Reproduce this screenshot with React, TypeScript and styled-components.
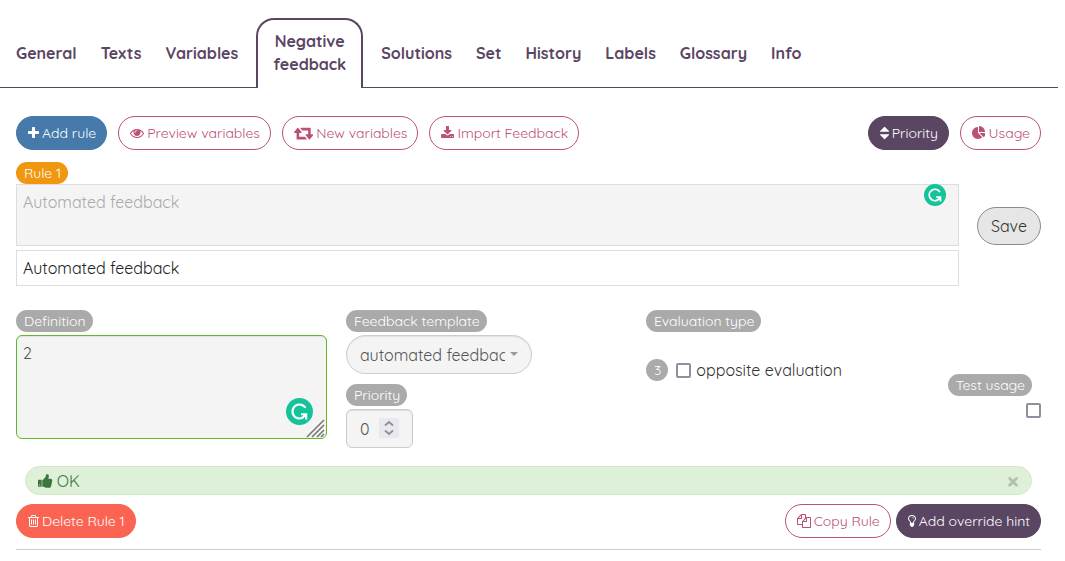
import React from 'react';
import styled, { createGlobalStyle, css } from 'styled-components';

const GlobalStyle = createGlobalStyle`
  *, *::before, *::after { box-sizing: border-box; }
  body {
    margin: 0;
    background: #fff;
    color: #333;
    font-family: Quicksand, Lato, 'Open Sans', sans-serif;
    font-size: 16px;
    line-height: 22px;
  }
  button, input, select, textarea { font: inherit; margin: 0; }
`;

const plum = '#5a4663';
const rose = '#bb5078';

/* Icons: drawn on a 1792 unit high grid, cropped to the width of the glyph */
const glyphs = {
  plus: ['192 0 1408 1792', 'M1600 736v192q0 40-28 68t-68 28h-416v416q0 40-28 68t-68 28h-192q-40 0-68-28t-28-68v-416h-416q-40 0-68-28t-28-68v-192q0-40 28-68t68-28h416v-416q0-40 28-68t68-28h192q40 0 68 28t28 68v416h416q40 0 68 28t28 68z'],
  eye: ['0 0 1792 1792', 'M1664 960q-152-236-381-353 61 104 61 225 0 185-131.5 316.5t-316.5 131.5-316.5-131.5-131.5-316.5q0-121 61-225-229 117-381 353 133 205 333.5 326.5t434.5 121.5 434.5-121.5 333.5-326.5zm-720-384q0-20-14-34t-34-14q-125 0-214.5 89.5t-89.5 214.5q0 20 14 34t34 14 34-14 14-34q0-86 61-147t147-61q20 0 34-14t14-34zm848 384q0 34-20 69-140 230-376.5 368.5t-499.5 138.5-499.5-139-376.5-368q-20-35-20-69t20-69q140-229 376.5-368t499.5-139 499.5 139 376.5 368q20 35 20 69z'],
  retweet: ['0 0 1920 1792', 'M1280 1504q0 13-9.5 22.5t-22.5 9.5h-960q-8 0-13.5-2t-9-7-5.5-8-3-11.5-1-11.5v-600h-192q-26 0-45-19t-19-45q0-24 15-41l320-384q19-22 49-22t49 22l320 384q15 17 15 41 0 26-19 45t-45 19h-192v384h576q16 0 25 11l160 192q7 10 7 21zm640-416q0 24-15 41l-320 384q-20 23-49 23t-49-23l-320-384q-15-17-15-41 0-26 19-45t45-19h192v-384h-576q-16 0-25-12l-160-192q-7-9-7-20 0-13 9.5-22.5t22.5-9.5h960q8 0 13.5 2t9 7 5.5 8 3 11.5 1 11.5v600h192q26 0 45 19t19 45z'],
  download: ['64 0 1664 1792', 'M1344 1344q0-26-19-45t-45-19-45 19-19 45 19 45 45 19 45-19 19-45zm256 0q0-26-19-45t-45-19-45 19-19 45 19 45 45 19 45-19 19-45zm128-224v320q0 40-28 68t-68 28h-1472q-40 0-68-28t-28-68v-320q0-40 28-68t68-28h465l135 136q58 56 136 56t136-56l136-136h464q40 0 68 28t28 68zm-325-569q17 41-14 70l-448 448q-18 19-45 19t-45-19l-448-448q-31-29-14-70 17-39 59-39h256v-448q0-26 19-45t45-19h256q26 0 45 19t19 45v448h256q42 0 59 39z'],
  sort: ['384 0 1024 1792', 'M1408 1088q0 26-19 45l-448 448q-19 19-45 19t-45-19l-448-448q-19-19-19-45t19-45 45-19h896q26 0 45 19t19 45zm0-384q0 26-19 45t-45 19h-896q-26 0-45-19t-19-45 19-45l448-448q19-19 45-19t45 19l448 448q19 19 19 45z'],
  pie: ['0 0 1728 1792', 'M768 890l546 546q-106 108-247.5 168t-298.5 60q-209 0-385.5-103t-279.5-279.5-103-385.5 103-385.5 279.5-279.5 385.5-103v762zm187 6h773q0 157-60 298.5t-168 247.5zm709-128h-768v-768q209 0 385.5 103t279.5 279.5 103 385.5z'],
  thumb: ['64 0 1664 1792', 'M320 1344q0-26-19-45t-45-19q-27 0-45.5 19t-18.5 45q0 27 18.5 45.5t45.5 18.5q26 0 45-18.5t19-45.5zm160-512v640q0 26-19 45t-45 19h-288q-26 0-45-19t-19-45v-640q0-26 19-45t45-19h288q26 0 45 19t19 45zm1184 0q0 86-55 149 15 44 15 76 3 76-43 137 17 56 0 117-15 57-54 94 9 112-49 181-64 76-197 78h-129q-66 0-144-15.5t-121.5-29-120.5-39.5q-123-43-158-44-26-1-45-19.5t-19-44.5v-641q0-25 18-43.5t43-20.5q24-2 76-59t101-121q68-87 101-120 18-18 31-48t17.5-48.5 13.5-60.5q7-39 12.5-61t19.5-52 34-50q19-19 45-19 46 0 82.5 10.5t60 26 40 40.5 24 45 12 50 5 45 .5 39q0 38-9.5 76t-19 60-27.5 56q-3 6-10 18t-11 22-8 24h277q78 0 135 57t57 135z'],
  trash: ['192 0 1408 1792', 'M704 736v576q0 14-9 23t-23 9h-64q-14 0-23-9t-9-23v-576q0-14 9-23t23-9h64q14 0 23 9t9 23zm256 0v576q0 14-9 23t-23 9h-64q-14 0-23-9t-9-23v-576q0-14 9-23t23-9h64q14 0 23 9t9 23zm256 0v576q0 14-9 23t-23 9h-64q-14 0-23-9t-9-23v-576q0-14 9-23t23-9h64q14 0 23 9t9 23zm128 724v-948h-896v948q0 22 7 40.5t14.5 27 10.5 8.5h832q3 0 10.5-8.5t14.5-27 7-40.5zm-672-1076h448l-48-117q-7-9-17-11h-317q-10 2-17 11zm928 32v64q0 14-9 23t-23 9h-96v948q0 83-47 143.5t-113 60.5h-832q-66 0-113-58.5t-47-141.5v-952h-96q-14 0-23-9t-9-23v-64q0-14 9-23t23-9h309l70-167q15-37 54-63t79-26h320q40 0 79 26t54 63l70 167h309q14 0 23 9t9 23z'],
  files: ['0 0 1792 1792', 'M1696 384q40 0 68 28t28 68v1216q0 40-28 68t-68 28h-960q-40 0-68-28t-28-68v-288h-544q-40 0-68-28t-28-68v-672q0-40 20-88t48-76l408-408q28-28 76-48t88-20h416q40 0 68 28t28 68v328q68-40 128-40h416zm-544 213l-299 299h299v-299zm-640-384l-299 299h299v-299zm196 647l316-316v-416h-384v416q0 40-28 68t-68 28h-416v640h512v-256q0-40 20-88t48-76zm956 804v-1152h-384v416q0 40-28 68t-68 28h-416v640h896z'],
  bulb: ['384 0 1024 1792', 'M1120 576q0 13-9.5 22.5t-22.5 9.5-22.5-9.5-9.5-22.5q0-46-54-71t-106-25q-13 0-22.5-9.5t-9.5-22.5 9.5-22.5 22.5-9.5q50 0 99.5 16t87 54 37.5 90zm160 0q0-72-34.5-134t-90-101.5-123-62-136.5-22.5-136.5 22.5-123 62-90 101.5-34.5 134q0 101 68 180 10 11 30.5 33t30.5 33q128 153 141 298h228q13-145 141-298 10-11 30.5-33t30.5-33q68-79 68-180zm128 0q0 155-103 268-45 49-74.5 87t-59.5 95.5-34 107.5q47 28 47 82 0 37-25 64 25 27 25 64 0 52-45 81 13 23 13 47 0 46-31.5 71t-77.5 25q-20 44-60 70t-87 26-87-26-60-70q-46 0-77.5-25t-31.5-71q0-24 13-47-45-29-45-81 0-37 25-64-25-27-25-64 0-54 47-82-4-50-34-107.5t-59.5-95.5-74.5-87q-103-113-103-268 0-99 44.5-184.5t117-142 164-89 186.5-32.5 186.5 32.5 164 89 117 142 44.5 184.5z'],
} as const;

const Svg = styled.svg<{ $size: number }>`
  display: block;
  flex: none;
  height: ${p => p.$size}px;
  width: auto;
  fill: currentColor;
`;

function Icon({ name, size = 14 }: { name: keyof typeof glyphs; size?: number }) {
  const [viewBox, d] = glyphs[name];
  return (
    <Svg $size={size} viewBox={viewBox} aria-hidden="true">
      <path d={d} />
    </Svg>
  );
}

/* Tabs */
const Tabs = styled.nav`
  display: flex;
  align-items: flex-end;
  margin: 18px 7px 0 0;
  padding-left: 4px;
  height: 70px;
  border-bottom: 1px solid ${plum};
`;

const Tab = styled.a<{ $active?: boolean }>`
  display: block;
  padding: 0 12px 22px;
  color: ${plum};
  font-weight: 700;
  line-height: 23px;
  text-align: center;
  text-decoration: none;
  ${p => p.$active && css`
    width: 107px;
    height: 70px;
    margin: 0 6px -1px;
    padding: 10px 14px 0;
    background: #fff;
    border: 2px solid ${plum};
    border-bottom: 0;
    border-radius: 18px 18px 0 0;
  `}
`;

/* Buttons */
const Page = styled.main`
  padding: 28px 24px 0 16px;
`;

const Toolbar = styled.div<{ $gap: number }>`
  display: flex;
  flex-wrap: wrap;
  gap: ${p => p.$gap}px;
`;

const Spacer = styled.span`
  flex: 1;
`;

const tones = {
  blue: ['#457aaa', '#457aaa', '#fff'],
  plum: [plum, plum, '#fff'],
  red: ['#fb6453', '#fb6453', '#fff'],
  outline: ['#fff', rose, rose],
};

const Button = styled.button<{ $tone: keyof typeof tones }>`
  display: inline-flex;
  align-items: center;
  gap: 3px;
  height: 34px;
  padding: 0 10px 0 11px;
  background: ${p => tones[p.$tone][0]};
  border: 1px solid ${p => tones[p.$tone][1]};
  border-radius: 17px;
  color: ${p => tones[p.$tone][2]};
  font-size: 14px;
  white-space: nowrap;
`;

const SaveButton = styled.button`
  height: 38px;
  margin-bottom: 18px;
  padding: 0 13px;
  background: #e6e6e6;
  border: 1px solid #8c8c8c;
  border-radius: 19px;
  color: #333;
`;

/* Badges */
const badge = css`
  display: block;
  width: fit-content;
  height: 22px;
  padding: 0 7px 0 8px;
  border-radius: 11px;
  background: #aaa;
  color: #fff;
  font-size: 14px;
  line-height: 22px;
  white-space: nowrap;
`;
const LabelBadge = styled.label`${badge}`;
const Badge = styled.span`${badge}`;
const RuleBadge = styled.label`
  ${badge}
  margin-top: 12px;
  background: #f0960f;
`;

/* Feedback editor */
const FeedbackRow = styled.section`
  display: flex;
  align-items: center;
  gap: 18px;
`;

const FeedbackFields = styled.div`
  flex: 1;
  display: grid;
  gap: 4px;
`;

const Anchor = styled.div`
  position: relative;
  display: flex;
`;

const FeedbackArea = styled.textarea`
  width: 100%;
  height: 62px;
  padding: 6px;
  background: #f4f4f4;
  border: 1px solid #ddd;
  resize: none;
  outline: 0;
  &::placeholder { color: #aaa; opacity: 1; }
`;

const FeedbackInput = styled.input`
  width: 100%;
  height: 36px;
  padding: 0 6px;
  background: #fff;
  border: 1px solid #ddd;
  color: #222;
`;

const HelperSlot = styled.span<{ $right: number; $top: number }>`
  position: absolute;
  right: ${p => p.$right}px;
  top: ${p => p.$top}px;
  display: flex;
`;

function HelperMark({ size }: { size: number }) {
  return (
    <svg width={size} height={size} viewBox="0 0 27 27" aria-hidden="true">
      <circle cx="13.5" cy="13.5" r="13.5" fill="#15c39a" />
      <path d="M19 9.200A7 7 0 1 0 16.500 19.800" fill="none" stroke="#fff" strokeWidth="2.2" strokeLinecap="round" />
      <path d="M15 16.200h5.200v5.200M19.800 16.600l-3.600 3.400" fill="none" stroke="#fff" strokeWidth="2.1" />
    </svg>
  );
}

/* Rule settings */
const Settings = styled.section`
  display: grid;
  grid-template-columns: 330fr 300fr 395fr;
  margin-top: 24px;
`;

const Column = styled.div`
  display: flex;
  flex-direction: column;
  gap: 3px;
`;

const DefinitionColumn = styled(Column)`
  padding-right: 19px;
`;

const DefinitionArea = styled.textarea`
  width: 100%;
  height: 104px;
  padding: 6px;
  background: #f4f4f4;
  border: 1px solid #5fb92b;
  border-radius: 6px;
  box-shadow: inset 0 1px 1px rgba(0, 0, 0, 0.08);
  color: #555;
  resize: none;
`;

const Grip = styled.svg`
  position: absolute;
  right: 2px;
  bottom: 1px;
  width: 19px;
  height: 19px;
  stroke: #777;
  stroke-width: 1.6;
`;

const control = css`
  height: 39px;
  background: #f4f4f4;
  border: 1px solid #ccc;
  box-shadow: inset 0 1px 1px rgba(0, 0, 0, 0.08);
  color: #555;
`;

const TemplateSelect = styled.select`
  ${control}
  appearance: none;
  width: 186px;
  padding: 0 26px 0 13px;
  border-radius: 20px;
  overflow: hidden;
  text-overflow: clip;
`;

const Caret = styled.span`
  position: absolute;
  left: 164px;
  top: 17px;
  border: 4px solid transparent;
  border-top-color: #999;
  border-bottom: 0;
  pointer-events: none;
`;

const PriorityBadge = styled(LabelBadge)`
  margin-top: 7px;
`;

const PriorityInput = styled.input`
  ${control}
  appearance: textfield;
  width: 67px;
  padding: 0 34px 0 13px;
  border-radius: 6px;
  &::-webkit-inner-spin-button { appearance: none; }
`;

const Stepper = styled.svg`
  position: absolute;
  left: 33px;
  top: 9px;
  width: 20px;
  height: 20px;
  background: #e9e9ed;
  fill: none;
  stroke: #8f8f9d;
  stroke-width: 1.8;
`;

const Checkbox = styled.input`
  appearance: none;
  flex: none;
  width: 15px;
  height: 15px;
  background: #fff;
  border: 2px solid #8f8f9d;
  border-radius: 2px;
`;

const OppositeRow = styled.div`
  display: flex;
  align-items: center;
  margin-top: 24px;
  gap: 8px;
`;

const CheckLabel = styled.label`
  display: flex;
  align-items: center;
  gap: 5px;
  color: #333;
`;

const UsageBlock = styled.div`
  display: flex;
  flex-direction: column;
  align-items: flex-end;
  gap: 7px;
  margin-top: -10px;
`;

const UsageBadge = styled(LabelBadge)`
  margin-right: 9px;
`;

/* Status and footer */
const Alert = styled.div`
  display: flex;
  align-items: center;
  gap: 4px;
  height: 29px;
  margin: 18px 9px 9px;
  padding: 0 12px;
  background: #dff0d8;
  border: 1px solid #d2e8c4;
  border-radius: 15px;
  color: #3c763d;
`;

const CloseButton = styled.button`
  margin-left: auto;
  padding: 0;
  background: none;
  border: 0;
  color: #b2c0ad;
  font-size: 24px;
  font-weight: 700;
`;

const Divider = styled.hr`
  margin: 11px 0 0;
  border: 0;
  border-top: 1px solid #ccc;
`;

const tabs = ['General', 'Texts', 'Variables', 'Negative feedback', 'Solutions', 'Set', 'History', 'Labels', 'Glossary', 'Info'];

export default function App() {
  return (
    <>
      <GlobalStyle />
      <Tabs>
        {tabs.map(tab => (
          <Tab
            key={tab}
            href="#"
            $active={tab === 'Negative feedback'}
            aria-current={tab === 'Negative feedback' ? 'page' : undefined}
          >
            {tab}
          </Tab>
        ))}
      </Tabs>
      <Page>
        <Toolbar $gap={11}>
          <Button $tone="blue"><Icon name="plus" />Add rule</Button>
          <Button $tone="outline"><Icon name="eye" />Preview variables</Button>
          <Button $tone="outline"><Icon name="retweet" size={18} />New variables</Button>
          <Button $tone="outline"><Icon name="download" />Import Feedback</Button>
          <Spacer />
          <Button $tone="plum"><Icon name="sort" size={16} />Priority</Button>
          <Button $tone="outline"><Icon name="pie" />Usage</Button>
        </Toolbar>

        <RuleBadge htmlFor="feedback">Rule 1</RuleBadge>
        <FeedbackRow>
          <FeedbackFields>
            <Anchor>
              <FeedbackArea id="feedback" placeholder="Automated feedback" />
              <HelperSlot $right={13} $top={0}><HelperMark size={22} /></HelperSlot>
            </Anchor>
            <FeedbackInput aria-label="Feedback text" defaultValue="Automated feedback" />
          </FeedbackFields>
          <SaveButton>Save</SaveButton>
        </FeedbackRow>

        <Settings>
          <DefinitionColumn>
            <LabelBadge htmlFor="definition">Definition</LabelBadge>
            <Anchor>
              <DefinitionArea id="definition" defaultValue="2" />
              <HelperSlot $right={14} $top={63}><HelperMark size={27} /></HelperSlot>
              <Grip viewBox="0 0 19 19" aria-hidden="true">
                <path d="M1 18L18 1M6 18L18 6M11 18l7-7M15 18l3-3" />
              </Grip>
            </Anchor>
          </DefinitionColumn>

          <Column>
            <LabelBadge htmlFor="template">Feedback template</LabelBadge>
            <Anchor>
              <TemplateSelect id="template" defaultValue="auto">
                <option value="auto">automated feedback</option>
              </TemplateSelect>
              <Caret />
            </Anchor>
            <PriorityBadge htmlFor="priority">Priority</PriorityBadge>
            <Anchor>
              <PriorityInput id="priority" type="number" defaultValue={0} />
              <Stepper viewBox="0 0 20 20" aria-hidden="true">
                <path d="M6 7.500L10 4l4 3.500M6 12.500L10 16l4-3.500" />
              </Stepper>
            </Anchor>
          </Column>

          <Column>
            <Badge>Evaluation type</Badge>
            <OppositeRow>
              <Badge>3</Badge>
              <CheckLabel>
                <Checkbox type="checkbox" />
                opposite evaluation
              </CheckLabel>
            </OppositeRow>
            <UsageBlock>
              <UsageBadge htmlFor="usage">Test usage</UsageBadge>
              <Checkbox id="usage" type="checkbox" />
            </UsageBlock>
          </Column>
        </Settings>

        <Alert role="status">
          <Icon name="thumb" size={16} />
          OK
          <CloseButton aria-label="Close">×</CloseButton>
        </Alert>

        <Toolbar $gap={5}>
          <Button $tone="red"><Icon name="trash" />Delete Rule 1</Button>
          <Spacer />
          <Button $tone="outline"><Icon name="files" />Copy Rule</Button>
          <Button $tone="plum"><Icon name="bulb" />Add override hint</Button>
        </Toolbar>
        <Divider />
      </Page>
    </>
  );
}
